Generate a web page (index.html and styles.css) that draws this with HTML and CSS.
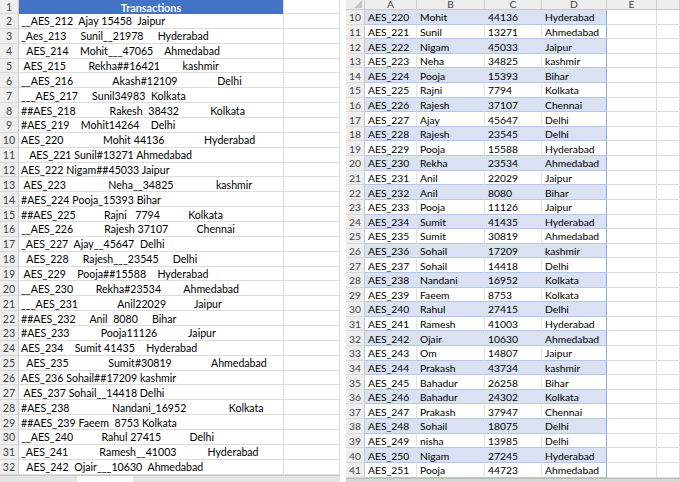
FILE: index.html
```html
<!DOCTYPE html>
<html>
<head>
<meta charset="utf-8">
<link rel="stylesheet" href="styles.css">
</head>
<body>
<div class="page">
  <section class="sheet left">
    <div class="grid lgrid">
      <div class="rh">1</div><div class="hdr">Transactions</div><div class="c"></div>
      <div class="rh">2</div><div class="c t">__AES_212  Ajay 15458  Jaipur</div><div class="c"></div>
      <div class="rh">3</div><div class="c t">_Aes_213     Sunil__21978     Hyderabad</div><div class="c"></div>
      <div class="rh">4</div><div class="c t">  AES_214    Mohit___47065    Ahmedabad</div><div class="c"></div>
      <div class="rh">5</div><div class="c t"> AES_215        Rekha##16421        kashmir</div><div class="c"></div>
      <div class="rh">6</div><div class="c t">__AES_216              Akash#12109              Delhi</div><div class="c"></div>
      <div class="rh">7</div><div class="c t">___AES_217     Sunil34983  Kolkata</div><div class="c"></div>
      <div class="rh">8</div><div class="c t">##AES_218            Rakesh  38432           Kolkata</div><div class="c"></div>
      <div class="rh">9</div><div class="c t">#AES_219    Mohit14264    Delhi</div><div class="c"></div>
      <div class="rh">10</div><div class="c t">AES_220              Mohit 44136              Hyderabad</div><div class="c"></div>
      <div class="rh">11</div><div class="c t">   AES_221 Sunil#13271 Ahmedabad</div><div class="c"></div>
      <div class="rh">12</div><div class="c t">AES_222 Nigam##45033 Jaipur</div><div class="c"></div>
      <div class="rh">13</div><div class="c t"> AES_223               Neha__34825               kashmir</div><div class="c"></div>
      <div class="rh">14</div><div class="c t">#AES_224 Pooja_15393 Bihar</div><div class="c"></div>
      <div class="rh">15</div><div class="c t">##AES_225          Rajni   7794          Kolkata</div><div class="c"></div>
      <div class="rh">16</div><div class="c t">__AES_226           Rajesh 37107          Chennai</div><div class="c"></div>
      <div class="rh">17</div><div class="c t">_AES_227  Ajay__45647  Delhi</div><div class="c"></div>
      <div class="rh">18</div><div class="c t">  AES_228     Rajesh___23545     Delhi</div><div class="c"></div>
      <div class="rh">19</div><div class="c t"> AES_229    Pooja##15588    Hyderabad</div><div class="c"></div>
      <div class="rh">20</div><div class="c t">__AES_230        Rekha#23534        Ahmedabad</div><div class="c"></div>
      <div class="rh">21</div><div class="c t">___AES_231              Anil22029          Jaipur</div><div class="c"></div>
      <div class="rh">22</div><div class="c t">##AES_232     Anil  8080     Bihar</div><div class="c"></div>
      <div class="rh">23</div><div class="c t">#AES_233           Pooja11126           Jaipur</div><div class="c"></div>
      <div class="rh">24</div><div class="c t">AES_234    Sumit 41435    Hyderabad</div><div class="c"></div>
      <div class="rh">25</div><div class="c t">  AES_235              Sumit#30819              Ahmedabad</div><div class="c"></div>
      <div class="rh">26</div><div class="c t">AES_236 Sohail##17209 kashmir</div><div class="c"></div>
      <div class="rh">27</div><div class="c t"> AES_237 Sohail__14418 Delhi</div><div class="c"></div>
      <div class="rh">28</div><div class="c t">#AES_238               Nandani_16952               Kolkata</div><div class="c"></div>
      <div class="rh">29</div><div class="c t">##AES_239 Faeem  8753 Kolkata</div><div class="c"></div>
      <div class="rh">30</div><div class="c t">__AES_240          Rahul 27415          Delhi</div><div class="c"></div>
      <div class="rh">31</div><div class="c t">_AES_241           Ramesh__41003           Hyderabad</div><div class="c"></div>
      <div class="rh">32</div><div class="c t">  AES_242  Ojair___10630  Ahmedabad</div><div class="c"></div>
    </div>
    <div class="tabbar"><span class="tab"></span></div>
  </section>

  <section class="sheet right">
    <div class="grid rgrid">
      <div class="corner"><svg width="8" height="8" viewBox="0 0 8 8"><polygon points="8,0 8,8 0,8" fill="#c4c4c4"/></svg></div>
      <div class="ch"><span>A</span></div><div class="ch"><span>B</span></div><div class="ch"><span>C</span></div><div class="ch"><span>D</span></div><div class="ch"><span>E</span></div><div class="ch"><span></span></div>

      <div class="rh">10</div><div class="tc b">AES_220</div><div class="tc b">Mohit</div><div class="tc b">44136</div><div class="tc b last">Hyderabad</div><div class="c"></div><div class="c"></div>
      <div class="rh">11</div><div class="tc">AES_221</div><div class="tc">Sunil</div><div class="tc">13271</div><div class="tc last">Ahmedabad</div><div class="c"></div><div class="c"></div>
      <div class="rh">12</div><div class="tc b">AES_222</div><div class="tc b">Nigam</div><div class="tc b">45033</div><div class="tc b last">Jaipur</div><div class="c"></div><div class="c"></div>
      <div class="rh">13</div><div class="tc">AES_223</div><div class="tc">Neha</div><div class="tc">34825</div><div class="tc last">kashmir</div><div class="c"></div><div class="c"></div>
      <div class="rh">14</div><div class="tc b">AES_224</div><div class="tc b">Pooja</div><div class="tc b">15393</div><div class="tc b last">Bihar</div><div class="c"></div><div class="c"></div>
      <div class="rh">15</div><div class="tc">AES_225</div><div class="tc">Rajni</div><div class="tc">7794</div><div class="tc last">Kolkata</div><div class="c"></div><div class="c"></div>
      <div class="rh">16</div><div class="tc b">AES_226</div><div class="tc b">Rajesh</div><div class="tc b">37107</div><div class="tc b last">Chennai</div><div class="c"></div><div class="c"></div>
      <div class="rh">17</div><div class="tc">AES_227</div><div class="tc">Ajay</div><div class="tc">45647</div><div class="tc last">Delhi</div><div class="c"></div><div class="c"></div>
      <div class="rh">18</div><div class="tc b">AES_228</div><div class="tc b">Rajesh</div><div class="tc b">23545</div><div class="tc b last">Delhi</div><div class="c"></div><div class="c"></div>
      <div class="rh">19</div><div class="tc">AES_229</div><div class="tc">Pooja</div><div class="tc">15588</div><div class="tc last">Hyderabad</div><div class="c"></div><div class="c"></div>
      <div class="rh">20</div><div class="tc b">AES_230</div><div class="tc b">Rekha</div><div class="tc b">23534</div><div class="tc b last">Ahmedabad</div><div class="c"></div><div class="c"></div>
      <div class="rh">21</div><div class="tc">AES_231</div><div class="tc">Anil</div><div class="tc">22029</div><div class="tc last">Jaipur</div><div class="c"></div><div class="c"></div>
      <div class="rh">22</div><div class="tc b">AES_232</div><div class="tc b">Anil</div><div class="tc b">8080</div><div class="tc b last">Bihar</div><div class="c"></div><div class="c"></div>
      <div class="rh">23</div><div class="tc">AES_233</div><div class="tc">Pooja</div><div class="tc">11126</div><div class="tc last">Jaipur</div><div class="c"></div><div class="c"></div>
      <div class="rh">24</div><div class="tc b">AES_234</div><div class="tc b">Sumit</div><div class="tc b">41435</div><div class="tc b last">Hyderabad</div><div class="c"></div><div class="c"></div>
      <div class="rh">25</div><div class="tc">AES_235</div><div class="tc">Sumit</div><div class="tc">30819</div><div class="tc last">Ahmedabad</div><div class="c"></div><div class="c"></div>
      <div class="rh">26</div><div class="tc b">AES_236</div><div class="tc b">Sohail</div><div class="tc b">17209</div><div class="tc b last">kashmir</div><div class="c"></div><div class="c"></div>
      <div class="rh">27</div><div class="tc">AES_237</div><div class="tc">Sohail</div><div class="tc">14418</div><div class="tc last">Delhi</div><div class="c"></div><div class="c"></div>
      <div class="rh">28</div><div class="tc b">AES_238</div><div class="tc b">Nandani</div><div class="tc b">16952</div><div class="tc b last">Kolkata</div><div class="c"></div><div class="c"></div>
      <div class="rh">29</div><div class="tc">AES_239</div><div class="tc">Faeem</div><div class="tc">8753</div><div class="tc last">Kolkata</div><div class="c"></div><div class="c"></div>
      <div class="rh">30</div><div class="tc b">AES_240</div><div class="tc b">Rahul</div><div class="tc b">27415</div><div class="tc b last">Delhi</div><div class="c"></div><div class="c"></div>
      <div class="rh">31</div><div class="tc">AES_241</div><div class="tc">Ramesh</div><div class="tc">41003</div><div class="tc last">Hyderabad</div><div class="c"></div><div class="c"></div>
      <div class="rh">32</div><div class="tc b">AES_242</div><div class="tc b">Ojair</div><div class="tc b">10630</div><div class="tc b last">Ahmedabad</div><div class="c"></div><div class="c"></div>
      <div class="rh">33</div><div class="tc">AES_243</div><div class="tc">Om</div><div class="tc">14807</div><div class="tc last">Jaipur</div><div class="c"></div><div class="c"></div>
      <div class="rh">34</div><div class="tc b">AES_244</div><div class="tc b">Prakash</div><div class="tc b">43734</div><div class="tc b last">kashmir</div><div class="c"></div><div class="c"></div>
      <div class="rh">35</div><div class="tc">AES_245</div><div class="tc">Bahadur</div><div class="tc">26258</div><div class="tc last">Bihar</div><div class="c"></div><div class="c"></div>
      <div class="rh">36</div><div class="tc b">AES_246</div><div class="tc b">Bahadur</div><div class="tc b">24302</div><div class="tc b last">Kolkata</div><div class="c"></div><div class="c"></div>
      <div class="rh">37</div><div class="tc">AES_247</div><div class="tc">Prakash</div><div class="tc">37947</div><div class="tc last">Chennai</div><div class="c"></div><div class="c"></div>
      <div class="rh">38</div><div class="tc b">AES_248</div><div class="tc b">Sohail</div><div class="tc b">18075</div><div class="tc b last">Delhi</div><div class="c"></div><div class="c"></div>
      <div class="rh">39</div><div class="tc">AES_249</div><div class="tc">nisha</div><div class="tc">13985</div><div class="tc last">Delhi</div><div class="c"></div><div class="c"></div>
      <div class="rh">40</div><div class="tc b">AES_250</div><div class="tc b">Nigam</div><div class="tc b">27245</div><div class="tc b last">Hyderabad</div><div class="c"></div><div class="c"></div>
      <div class="rh">41</div><div class="tc">AES_251</div><div class="tc">Pooja</div><div class="tc">44723</div><div class="tc last">Ahmedabad</div><div class="c"></div><div class="c"></div>
      <div class="rh">42</div><div class="tc b"></div><div class="tc b"></div><div class="tc b"></div><div class="tc b last"></div><div class="c"></div><div class="c"></div>
    </div>
    <div class="rbar"></div>
  </section>
</div>
</body>
</html>
```

FILE: styles.css
```css
* { box-sizing: border-box; }
html, body { margin: 0; padding: 0; background: #ffffff; }
body {
  width: 680px;
  height: 482px;
  overflow: hidden;
  font-family: "Lato", "Open Sans", sans-serif;
  color: #000;
}
.page {
  display: flex;
  gap: 6px;
  width: 680px;
  height: 482px;
}
.sheet {
  display: flex;
  flex-direction: column;
  height: 482px;
  overflow: hidden;
}
.left { width: 340px; }
.right { width: 334px; }

.grid { display: grid; overflow: hidden; }
.lgrid {
  grid-template-columns: 19px 265px 56px;
  grid-template-rows: 14px repeat(31, 14.87px);
  font-size: 10.6px;
}
.rgrid {
  flex: 1;
  grid-template-columns: 19px 52px 68px 57px 65px 50px 23px;
  grid-template-rows: 10px;
  grid-auto-rows: 14.62px;
  font-size: 10.3px;
  align-content: start;
}

.rh {
  background: #eeeeee;
  border-right: 1px solid #c8c8c8;
  border-bottom: 1px solid #d8d8d8;
  color: #444;
  text-align: center;
  display: flex;
  align-items: center;
  justify-content: center;
  overflow: hidden;
  padding-top: 1px;
}
.c {
  border-right: 1px solid #dcdcdc;
  border-bottom: 1px solid #dcdcdc;
}
.t {
  white-space: pre;
  word-spacing: 0.12px;
  padding-left: 2px;
  padding-top: 1px;
  display: flex;
  align-items: center;
  overflow: visible;
}
.hdr {
  background: #4472c4;
  color: #fff;
  font-weight: 700;
  text-align: center;
  display: flex;
  align-items: center;
  justify-content: center;
  border-right: 1px solid #dcdcdc;
  font-size: 10.8px;
}

.corner {
  background: #eeeeee;
  border-right: 1px solid #c8c8c8;
  border-bottom: 1px solid #c8c8c8;
  display: flex;
  align-items: flex-end;
  justify-content: flex-end;
  padding: 0 2px 1px 0;
}
.ch {
  background: #eeeeee;
  border-right: 1px solid #d0d0d0;
  border-bottom: 1px solid #c8c8c8;
  color: #444;
  overflow: hidden;
  display: flex;
  align-items: flex-end;
  justify-content: center;
}
.ch span {
  display: block;
  line-height: 12px;
  height: 12px;
  margin-bottom: -1px;
}
.tc {
  padding-left: 3px;
  padding-top: 1px;
  display: flex;
  align-items: center;
  white-space: pre;
  border-right: 1px solid #e2e2e2;
  border-bottom: 1px solid #b4c6e7;
  background: #fff;
}
.tc.b {
  background: #d9e1f2;
  border-right-color: #d9e1f2;
}
.tc.last { border-right: 1px solid #8ea9db; }

.tabbar {
  flex: 1;
  background: #e4e4e4;
  border-top: 1px solid #c8c8c8;
  display: flex;
  padding-left: 77px;
}
.tab {
  width: 56px;
  background: #fafafa;
}
.rbar {
  height: 4px;
  background: #d6d6d6;
  border-top: 1px solid #bdbdbd;
}
```
